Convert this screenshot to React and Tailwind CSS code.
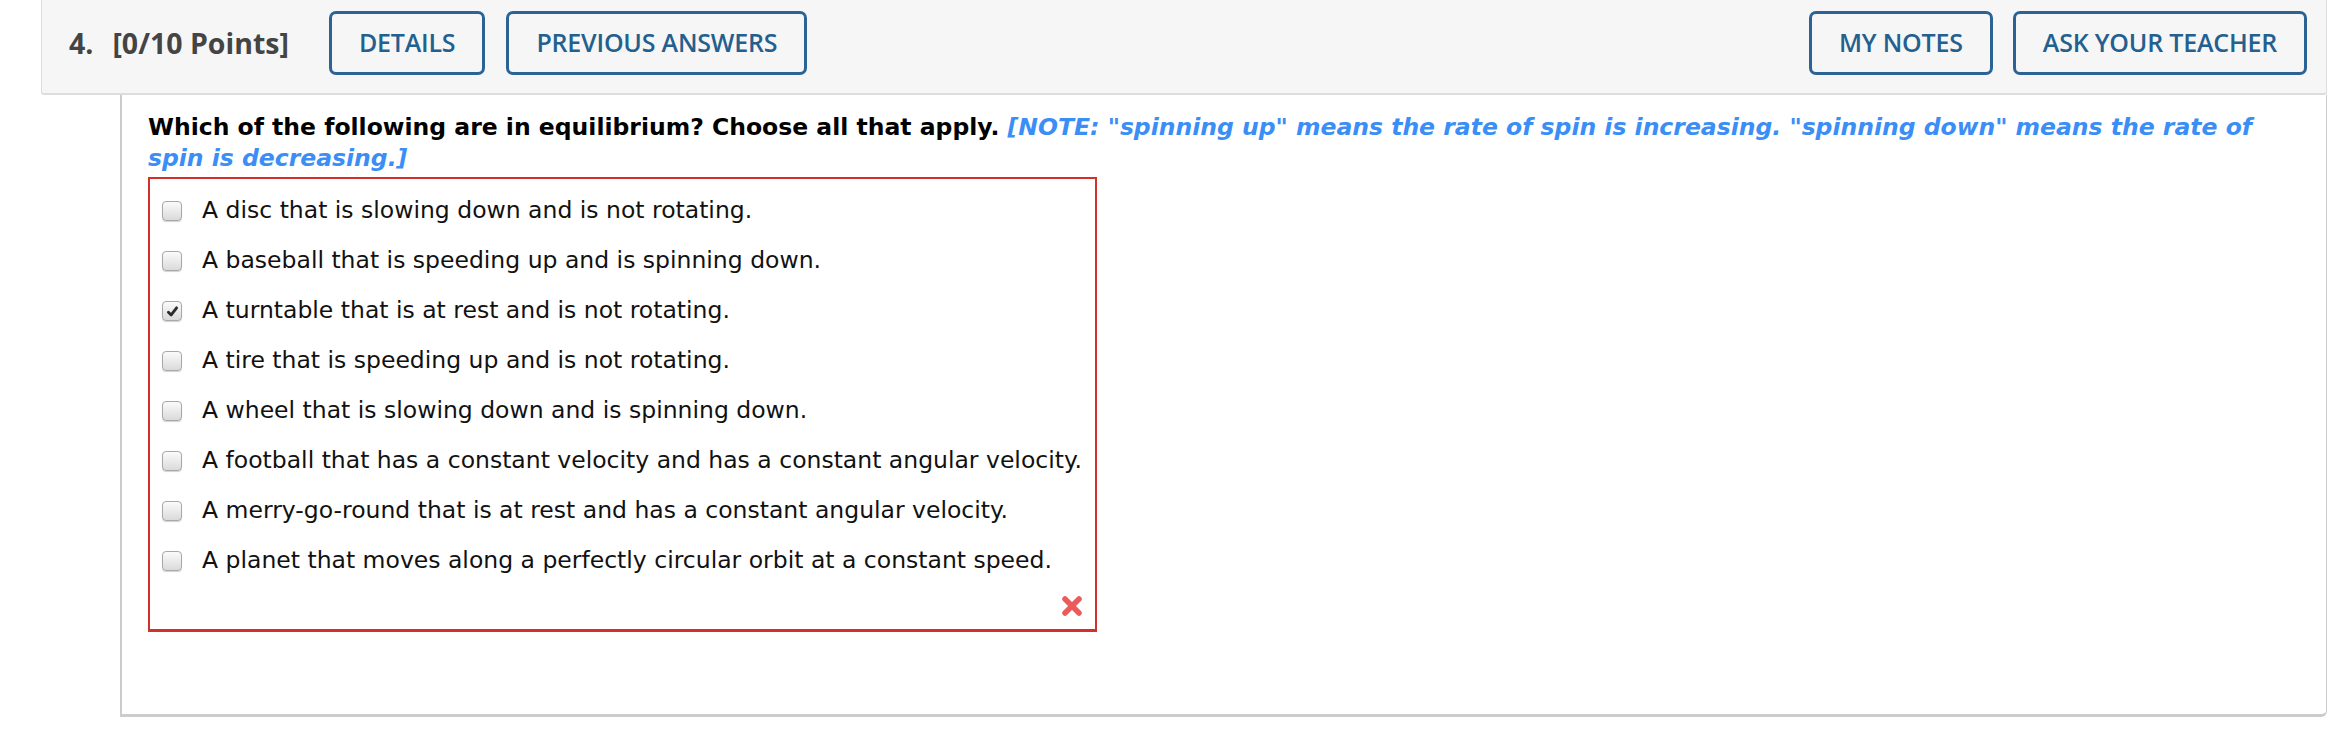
import React from 'react';

const options = [
    { text: 'A disc that is slowing down and is not rotating.', checked: false },
    { text: 'A baseball that is speeding up and is spinning down.', checked: false },
    { text: 'A turntable that is at rest and is not rotating.', checked: true },
    { text: 'A tire that is speeding up and is not rotating.', checked: false },
    { text: 'A wheel that is slowing down and is spinning down.', checked: false },
    { text: 'A football that has a constant velocity and has a constant angular velocity.', checked: false },
    { text: 'A merry-go-round that is at rest and has a constant angular velocity.', checked: false },
    { text: 'A planet that moves along a perfectly circular orbit at a constant speed.', checked: false },
];

const HeaderButton = ({ children }) => (
    <button className="flex h-[64px] items-center rounded-[7px] border-[3px] border-[#2a6394] bg-transparent px-[27px] text-[25px] font-semibold tracking-[-0.2px] text-[#24608f]">
        {children}
    </button>
);

const Checkbox = ({ checked }) => (
    <span className="flex h-[20px] w-[20px] shrink-0 items-center justify-center rounded-[4px] border border-[#a8a8a8] bg-gradient-to-b from-[#fbfbfb] to-[#dadada] shadow-[0_1px_1px_rgba(0,0,0,0.18)]">
        {checked && (
            <svg viewBox="0 0 12 12" className="h-[13px] w-[13px]">
                <path d="M2.2 6.6 L4.8 9.2 L9.8 2.6" fill="none" stroke="#2b2b2b" strokeWidth="2.6" strokeLinecap="round" strokeLinejoin="round" />
            </svg>
        )}
    </span>
);

const WrongMark = () => (
    <svg viewBox="0 0 24 24" className="h-[24px] w-[26px]">
        <path d="M5 5 L19 19 M19 5 L5 19" fill="none" stroke="#ec5b5c" strokeWidth="5.5" strokeLinecap="round" />
    </svg>
);

export default function App() {
    return (
        <div className="min-h-screen bg-white font-['Open_Sans',sans-serif]">
            {/* question header */}
            <div className="ml-[41px] mr-[24px] flex h-[95px] items-start justify-between rounded-b-[3px] border border-t-0 border-b-2 border-[#dddddd] bg-[#f6f6f6] pl-[27px] pr-[19px] pt-[11px]">
                <div className="flex items-center">
                    <span className="mr-[40px] flex h-[64px] items-center gap-[19px] text-[28.5px] font-bold text-[#444444]">
                        <span>4.</span>
                        <span>[0/10 Points]</span>
                    </span>
                    <div className="flex gap-[21px]">
                        <HeaderButton>DETAILS</HeaderButton>
                        <HeaderButton>PREVIOUS ANSWERS</HeaderButton>
                    </div>
                </div>
                <div className="flex gap-[20px]">
                    <HeaderButton>MY NOTES</HeaderButton>
                    <HeaderButton>ASK YOUR TEACHER</HeaderButton>
                </div>
            </div>

            {/* question body */}
            <div className="ml-[120px] mr-[24px] h-[622px] rounded-br-[6px] border-b-[3px] border-l-2 border-r border-[#cccccc] pl-[26px] pr-[60px] pt-[17px] font-['DejaVu_Sans',Verdana,sans-serif]">
                <p className="text-[23.5px] leading-[31px] font-bold text-black">
                    Which of the following are in equilibrium? Choose all that apply.{' '}
                    <span className="italic text-[#3a8ef5]">
                        [NOTE: "spinning up" means the rate of spin is increasing. "spinning down" means the rate of spin is decreasing.]
                    </span>
                </p>
                <div className="mt-[3px] w-[949px] border-2 border-b-[3px] border-[#d2302b] pl-[12px] pr-[10px] pt-[7px]">
                    {options.map((opt) => (
                        <label key={opt.text} className="flex h-[50px] items-center gap-[20px] text-[23.5px] text-[#111111]">
                            <Checkbox checked={opt.checked} />
                            <span>{opt.text}</span>
                        </label>
                    ))}
                    <div className="mt-[8px] flex h-[24px] justify-end pb-[35px]">
                        <WrongMark />
                    </div>
                </div>
            </div>
        </div>
    );
}
